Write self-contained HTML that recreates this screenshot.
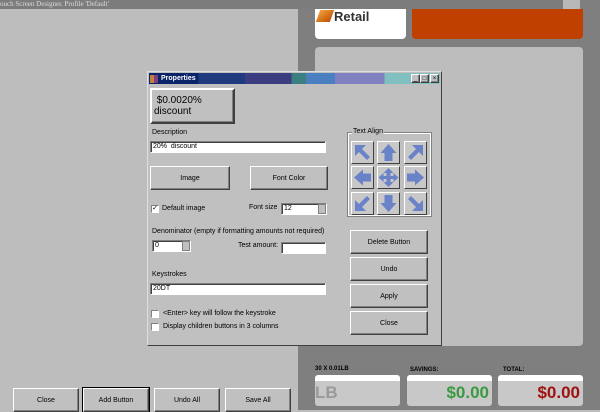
<!DOCTYPE html><html><head><style>
*{margin:0;padding:0;box-sizing:border-box}
body{width:600px;height:410px;overflow:hidden;background:#bdbdbd;font-family:"Liberation Sans",sans-serif;position:relative;font-size:7px;color:#000}
.a{position:absolute}
.btn{position:absolute;background:#c0c0c0;border:1px solid;border-color:#fff #404040 #404040 #fff;box-shadow:inset -1px -1px #808080;display:flex;align-items:center;justify-content:center;font-size:7px}
.inp{position:absolute;background:#fff;border:1px solid;border-color:#808080 #fff #fff #808080;box-shadow:inset 1px 1px #404040;font-size:7px;padding-left:2px;line-height:9px}
.cb{position:absolute;width:8px;height:8px;background:#fff;border:1px solid;border-color:#808080 #fff #fff #808080;font-size:7px;line-height:6px;text-align:center}
.ar{position:absolute;width:23px;height:23px;background:#c8c8c8;border:1px solid;border-color:#fff #404040 #404040 #fff}
.ar svg{width:21px;height:21px}
</style></head><body>
<div class="a" style="left:298px;top:0;width:302px;height:410px;background:#7f7f7f"></div>
<div class="a" style="left:0;top:0;width:563px;height:9px;background:#7c7c7c;color:#ddd;font-size:7px;line-height:8px;font-family:'Liberation Serif',serif">ouch Screen Designer. Profile 'Default'</div>
<div class="a" style="left:563px;top:0;width:17px;height:9px;background:#b8b8b8"></div>
<div class="a" style="left:315px;top:9px;width:91px;height:30px;background:#fff;border-radius:0 0 4px 4px"></div>
<div class="a" style="left:318px;top:10px;width:14px;height:12px;background:linear-gradient(135deg,#f0a040,#c05000);transform:skewX(-20deg)"></div>
<div class="a" style="left:334px;top:9px;font-size:13px;font-weight:bold;color:#333">Retail</div>
<div class="a" style="left:412px;top:9px;width:171px;height:30px;background:#c04000;border-radius:0 0 4px 4px"></div>
<div class="a" style="left:315px;top:47px;width:268px;height:299px;background:#bdbdbd;border-radius:4px"></div>
<div class="a" style="left:315px;top:366px;font-size:6px;font-weight:bold">30 X 0.01LB</div>
<div class="a" style="left:410px;top:367px;font-size:6px;font-weight:bold">SAVINGS:</div>
<div class="a" style="left:503px;top:367px;font-size:6px;font-weight:bold">TOTAL:</div>
<div class="a" style="left:315px;top:375px;width:85px;height:31px;background:linear-gradient(#fff 0,#fff 6px,#c8c8c8 6px);border-radius:3px;font-size:17px;font-weight:bold;color:#999;line-height:31px;padding-top:2px">LB</div>
<div class="a" style="left:407px;top:375px;width:85px;height:31px;background:linear-gradient(#fff 0,#fff 6px,#c8c8c8 6px);border-radius:3px;font-size:17px;font-weight:bold;color:#3a9a40;line-height:31px;text-align:right;padding:2px 3px 0 0">$0.00</div>
<div class="a" style="left:498px;top:375px;width:85px;height:31px;background:linear-gradient(#fff 0,#fff 6px,#c8c8c8 6px);border-radius:3px;font-size:17px;font-weight:bold;color:#a01010;line-height:31px;text-align:right;padding:2px 3px 0 0">$0.00</div>

<div class="btn" style="left:13px;top:388px;width:66px;height:24px">Close</div>
<div class="btn" style="left:83px;top:388px;width:66px;height:24px;outline:1px solid #000">Add Button</div>
<div class="btn" style="left:154px;top:388px;width:66px;height:24px">Undo All</div>
<div class="btn" style="left:225px;top:388px;width:66px;height:24px">Save All</div>

<div class="a" style="left:147px;top:71px;width:295px;height:275px;background:#c0c0c0;border:1px solid;border-color:#dfdfdf #404040 #404040 #dfdfdf"></div>
<div class="a" style="left:149px;top:73px;width:291px;height:11px;background:linear-gradient(90deg,#0a246a 0,#0a246a 17%,#203a80 17%,#203a80 33%,#3c3c80 33%,#3c3c80 49%,#3a8080 49%,#3a8080 54%,#4a80c0 54%,#4a80c0 64%,#8080c0 64%,#8080c0 81%,#80c0c0 81%);color:#fff;font-weight:bold;font-size:7px;line-height:11px;padding-left:12px">Properties</div>
<div class="a" style="left:150px;top:75px;width:8px;height:8px;background:linear-gradient(90deg,#c08040 50%,#804080 50%)"></div>
<div class="btn" style="left:411px;top:74px;width:9px;height:9px;font-size:6px">_</div>
<div class="btn" style="left:420px;top:74px;width:9px;height:9px;font-size:6px">□</div>
<div class="btn" style="left:430px;top:74px;width:9px;height:9px;font-size:6px">×</div>

<div class="btn" style="left:150px;top:88px;width:85px;height:36px;justify-content:flex-start;font-size:10px;line-height:11px;padding-left:2px;border-width:2px;border-color:#fff #404040 #404040 #fff">&nbsp;$0.0020%<br>discount</div>
<div class="a" style="left:152px;top:129px">Description</div>
<div class="inp" style="left:150px;top:141px;width:176px;height:12px">20%&nbsp; discount</div>
<div class="btn" style="left:150px;top:166px;width:80px;height:24px">Image</div>
<div class="btn" style="left:250px;top:166px;width:78px;height:24px">Font Color</div>
<div class="cb" style="left:151px;top:205px">✓</div>
<div class="a" style="left:162px;top:205px">Default image</div>
<div class="a" style="left:249px;top:204px">Font size</div>
<div class="inp" style="left:281px;top:203px;width:46px;height:12px">12</div>
<div class="a" style="left:318px;top:204px;width:8px;height:10px;background:#c0c0c0;border:1px solid #808080"></div>

<div class="a" style="left:348px;top:133px;width:83px;height:83px;border:1px solid #fff;outline:1px solid #808080"></div>
<div class="a" style="left:352px;top:128px;background:#c0c0c0;padding:0 1px">Text Align</div>

<div class="ar" style="left:351px;top:141px"><svg viewBox="0 0 21 21"><path d="M3 3h11l-4 4 8 8-3 3-8-8-4 4z" fill="#6a82c8"/></svg></div>
<div class="ar" style="left:377px;top:141px"><svg viewBox="0 0 21 21"><path d="M10.5 2l8 9h-4v8h-8v-8h-4z" fill="#6a82c8"/></svg></div>
<div class="ar" style="left:404px;top:141px"><svg viewBox="0 0 21 21"><path d="M18 3v11l-4-4-8 8-3-3 8-8-4-4z" fill="#6a82c8"/></svg></div>
<div class="ar" style="left:351px;top:166px"><svg viewBox="0 0 21 21"><path d="M2 10.5l9-8v4h8v8h-8v4z" fill="#6a82c8"/></svg></div>
<div class="ar" style="left:377px;top:166px"><svg viewBox="0 0 21 21"><path d="M10.5 1l5 5h-3v3h3v-3l5 4.5-5 4.5v-3h-3v3h3l-5 5-5-5h3v-3h-3v3l-5-4.5 5-4.5v3h3v-3h-3z" fill="#6a82c8"/></svg></div>
<div class="ar" style="left:404px;top:166px"><svg viewBox="0 0 21 21"><path d="M19 10.5l-9 8v-4h-8v-8h8v-4z" fill="#6a82c8"/></svg></div>
<div class="ar" style="left:351px;top:192px"><svg viewBox="0 0 21 21"><path d="M3 18v-11l4 4 8-8 3 3-8 8 4 4z" fill="#6a82c8"/></svg></div>
<div class="ar" style="left:377px;top:192px"><svg viewBox="0 0 21 21"><path d="M10.5 19l8-9h-4v-8h-8v8h-4z" fill="#6a82c8"/></svg></div>
<div class="ar" style="left:404px;top:192px"><svg viewBox="0 0 21 21"><path d="M18 18h-11l4-4-8-8 3-3 8 8 4-4z" fill="#6a82c8"/></svg></div>

<div class="a" style="left:152px;top:228px">Denominator (empty if formatting amounts not required)</div>
<div class="inp" style="left:152px;top:240px;width:39px;height:12px">0</div>
<div class="a" style="left:182px;top:241px;width:8px;height:10px;background:#c0c0c0;border:1px solid #808080"></div>
<div class="a" style="left:238px;top:242px">Test amount:</div>
<div class="inp" style="left:281px;top:242px;width:45px;height:12px"></div>
<div class="a" style="left:152px;top:271px">Keystrokes</div>
<div class="inp" style="left:150px;top:283px;width:176px;height:12px">20DT</div>
<div class="cb" style="left:151px;top:310px"></div>
<div class="a" style="left:163px;top:310px">&lt;Enter&gt; key will follow the keystroke</div>
<div class="cb" style="left:151px;top:323px"></div>
<div class="a" style="left:163px;top:323px">Display children buttons in 3 columns</div>

<div class="btn" style="left:350px;top:230px;width:78px;height:24px">Delete Button</div>
<div class="btn" style="left:350px;top:257px;width:78px;height:24px">Undo</div>
<div class="btn" style="left:350px;top:284px;width:78px;height:24px">Apply</div>
<div class="btn" style="left:350px;top:311px;width:78px;height:24px">Close</div>
</body></html>
